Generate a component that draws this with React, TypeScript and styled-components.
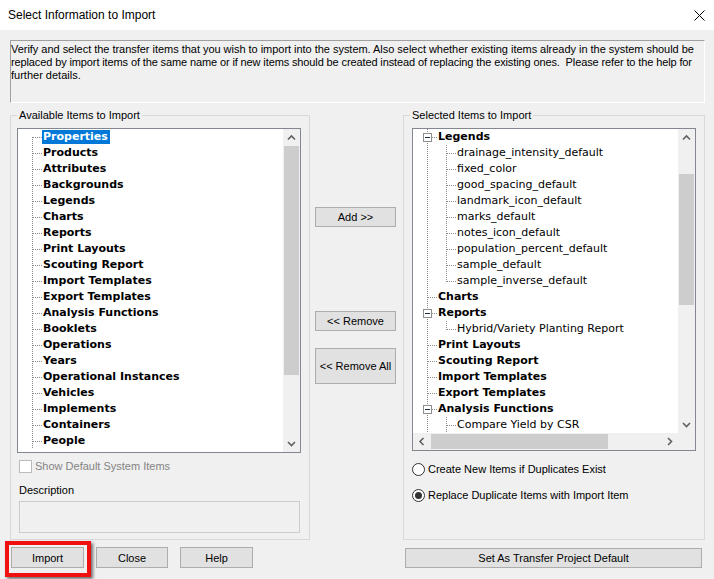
import React from 'react';
import styled, { createGlobalStyle } from 'styled-components';

const UI = `"Liberation Sans", Arial, sans-serif`;
const TREE = `"DejaVu Sans", Verdana, sans-serif`;

const GlobalStyle = createGlobalStyle`
  html, body { margin: 0; padding: 0; background: #f0f0f0; }
  body { font-family: ${UI}; }
  * { box-sizing: border-box; }
`;

const Window = styled.div`
  width: 714px;
  height: 579px;
  background: #f0f0f0;
  display: flex;
  flex-direction: column;
  overflow: hidden;
  font-family: ${UI};
  font-size: 11px;
  color: #000;
`;

const TitleBar = styled.div`
  flex: none;
  height: 30px;
  background: #fff;
  display: flex;
  align-items: center;
  justify-content: space-between;
  padding: 0 9px 0 8px;
`;

const Title = styled.div`
  font-size: 12px;
  line-height: 16px;
`;

const Body = styled.div`
  display: flex;
  flex-direction: column;
  padding: 10px 9px 0 10px;
`;

const Intro = styled.div`
  flex: none;
  height: 63px;
  border: 1px solid;
  border-color: #a0a0a0 #ffffff #ffffff #a0a0a0;
  padding: 2px 0 0 0;
  line-height: 13px;
  white-space: nowrap;
  overflow: hidden;
`;

const IntroLine = styled.div<{ $ls: number }>`
  letter-spacing: ${(p) => p.$ls}px;
`;

const Main = styled.div`
  margin-top: 6px;
  height: 431px;
  display: grid;
  grid-template-columns: 300px 93px 302px;
`;

const Group = styled.fieldset<{ $pl: number; $pr: number }>`
  margin: 0;
  min-width: 0;
  border: 1px solid #d9d9d9;
  padding: 6px ${(p) => p.$pr}px 0 ${(p) => p.$pl}px;
  display: flex;
  flex-direction: column;
`;

const Legend = styled.legend<{ $ml?: number }>`
  padding: 0 2px;
  margin-left: ${(p) => p.$ml ?? 0}px;
  font-size: 11px;
  line-height: 13px;
`;

const TreeFrame = styled.div<{ $h: number; $hscroll?: boolean }>`
  flex: none;
  height: ${(p) => p.$h}px;
  border: 1px solid #828790;
  background: #fff;
  display: grid;
  grid-template-columns: 1fr 17px;
  grid-template-rows: ${(p) => (p.$hscroll ? '1fr 17px' : '1fr')};
  overflow: hidden;
`;

const TreeList = styled.div`
  overflow: hidden;
  padding-left: 5px;
  display: flex;
  flex-direction: column;
  background: #fff;
`;

const TreeRowBox = styled.div`
  display: flex;
  align-items: center;
  height: 16px;
  flex: none;
`;

const CellSvg = styled.svg`
  display: block;
  flex: none;
`;

const NodeLabel = styled.span<{ $bold: boolean; $selected?: boolean }>`
  font-family: ${TREE};
  font-size: 11px;
  font-weight: ${(p) => (p.$bold ? 700 : 400)};
  line-height: 14px;
  height: 14px;
  padding: 0 2px 0 1px;
  white-space: nowrap;
  background: ${(p) => (p.$selected ? '#0078d7' : 'transparent')};
  color: ${(p) => (p.$selected ? '#ffffff' : '#000000')};
`;

const ScrollV = styled.div`
  background: #f0f0f0;
  display: flex;
  flex-direction: column;
`;

const ScrollH = styled.div`
  background: #f0f0f0;
  display: flex;
  flex-direction: row;
`;

const Corner = styled.div`
  background: #f0f0f0;
`;

const ArrowBox = styled.div`
  flex: none;
  width: 17px;
  height: 17px;
  display: flex;
  align-items: center;
  justify-content: center;
`;

const TrackV = styled.div`
  flex: 1;
  min-height: 0;
`;

const TrackH = styled.div`
  flex: 1;
  min-width: 0;
  display: flex;
`;

const ThumbV = styled.div<{ $offset: number; $size: number }>`
  margin: ${(p) => p.$offset}px 1px 0 1px;
  height: ${(p) => p.$size}px;
  background: #cdcdcd;
`;

const ThumbH = styled.div<{ $offset: number; $size: number }>`
  margin: 1px 0 1px ${(p) => p.$offset}px;
  width: ${(p) => p.$size}px;
  background: #cdcdcd;
`;

const CheckRow = styled.label`
  margin-top: 7px;
  margin-left: 2px;
  height: 13px;
  display: flex;
  align-items: center;
  gap: 3px;
  color: #838383;
  line-height: 13px;
`;

const CheckBox = styled.span`
  width: 13px;
  height: 13px;
  border: 1px solid #bcbcbc;
  background: #ffffff;
  flex: none;
`;

const FieldLabel = styled.div`
  margin-top: 11px;
  margin-left: 2px;
  line-height: 13px;
`;

const DescField = styled.div`
  margin-top: 4px;
  margin-left: 2px;
  width: 281px;
  height: 32px;
  border: 1px solid #cccccc;
  background: #f0f0f0;
`;

const Middle = styled.div`
  display: flex;
  flex-direction: column;
  align-items: flex-start;
  padding-left: 5px;
`;

const Button = styled.button<{ $w: number; $h?: number; $mt?: number }>`
  width: ${(p) => p.$w}px;
  height: ${(p) => p.$h ?? 21}px;
  margin: ${(p) => p.$mt ?? 0}px 0 0 0;
  padding: 0;
  background: #e1e1e1;
  border: 1px solid #adadad;
  font-family: ${UI};
  font-size: 11px;
  color: #000;
  flex: none;
`;

const RadioRow = styled.label<{ $mt: number }>`
  margin-top: ${(p) => p.$mt}px;
  height: 13px;
  display: flex;
  align-items: center;
  gap: 3px;
  line-height: 13px;
`;

const RadioCircle = styled.span<{ $checked?: boolean }>`
  width: 13px;
  height: 13px;
  border-radius: 50%;
  border: 1px solid #333333;
  background: #ffffff;
  flex: none;
  display: flex;
  align-items: center;
  justify-content: center;
  &::after {
    content: '';
    width: 7px;
    height: 7px;
    border-radius: 50%;
    background: ${(p) => (p.$checked ? '#333333' : 'transparent')};
  }
`;

const Footer = styled.div`
  margin-top: 7px;
  display: grid;
  grid-template-columns: 393px 302px;
`;

const LeftButtons = styled.div`
  display: flex;
  gap: 12px;
  padding-left: 1px;
`;

const RightButtons = styled.div`
  padding-left: 2px;
  padding-top: 1px;
`;

const HighlightWrap = styled.div`
  position: relative;
  display: flex;
`;

const Highlight = styled.div`
  position: absolute;
  left: -6px;
  top: -6px;
  right: -7px;
  bottom: -9px;
  border: 4px solid #f01010;
  box-shadow: 2px 2px 3px rgba(0, 0, 0, 0.55);
  pointer-events: none;
`;

const DOT = '#8a8a8a';

type Conn = {
  top: boolean;
  bottom: boolean;
  expander?: boolean;
};

const ConnectorCell: React.FC<Conn> = ({ top, bottom, expander }) => (
  <CellSvg width="19" height="16" viewBox="0 0 19 16">
    {top && (
      <line x1="9.5" y1="0" x2="9.5" y2={expander ? 4 : 9} stroke={DOT} strokeDasharray="1 1" />
    )}
    {bottom && (
      <line x1="9.5" y1={expander ? 14 : 8} x2="9.5" y2="16" stroke={DOT} strokeDasharray="1 1" />
    )}
    <line x1={expander ? 14 : 10} y1="8.5" x2="19" y2="8.5" stroke={DOT} strokeDasharray="1 1" />
    {expander && (
      <>
        <rect x="5.5" y="4.5" width="8" height="8" fill="#ffffff" stroke="#8f8f8f" />
        <line x1="7" y1="8.5" x2="12" y2="8.5" stroke="#1e2a44" />
      </>
    )}
  </CellSvg>
);

const PassCell: React.FC = () => (
  <CellSvg width="19" height="16" viewBox="0 0 19 16">
    <line x1="9.5" y1="0" x2="9.5" y2="16" stroke={DOT} strokeDasharray="1 1" />
  </CellSvg>
);

type Row = {
  label: string;
  depth: 0 | 1;
  bold: boolean;
  top: boolean;
  bottom: boolean;
  expander?: boolean;
  selected?: boolean;
};

const TreeRow: React.FC<{ row: Row }> = ({ row }) => (
  <TreeRowBox>
    {row.depth === 1 && <PassCell />}
    <ConnectorCell top={row.top} bottom={row.bottom} expander={row.expander} />
    <NodeLabel $bold={row.bold} $selected={row.selected}>
      {row.label}
    </NodeLabel>
  </TreeRowBox>
);

const Chevron: React.FC<{ dir: 'up' | 'down' | 'left' | 'right' }> = ({ dir }) => {
  const d = {
    up: 'M1 5.5 L4.5 2 L8 5.5',
    down: 'M1 2 L4.5 5.5 L8 2',
    left: 'M5.5 1 L2 4.5 L5.5 8',
    right: 'M2 1 L5.5 4.5 L2 8',
  }[dir];
  const horizontal = dir === 'up' || dir === 'down';
  return (
    <CellSvg
      width={horizontal ? 9 : 8}
      height={horizontal ? 8 : 9}
      viewBox={horizontal ? '0 0 9 8' : '0 0 8 9'}
    >
      <path d={d} fill="none" stroke="#606060" strokeWidth="1.6" />
    </CellSvg>
  );
};

const VScroll: React.FC<{ offset: number; size: number }> = ({ offset, size }) => (
  <ScrollV>
    <ArrowBox>
      <Chevron dir="up" />
    </ArrowBox>
    <TrackV>
      <ThumbV $offset={offset} $size={size} />
    </TrackV>
    <ArrowBox>
      <Chevron dir="down" />
    </ArrowBox>
  </ScrollV>
);

const HScroll: React.FC<{ offset: number; size: number }> = ({ offset, size }) => (
  <ScrollH>
    <ArrowBox>
      <Chevron dir="left" />
    </ArrowBox>
    <TrackH>
      <ThumbH $offset={offset} $size={size} />
    </TrackH>
    <ArrowBox>
      <Chevron dir="right" />
    </ArrowBox>
  </ScrollH>
);

const leftNames = [
  'Properties',
  'Products',
  'Attributes',
  'Backgrounds',
  'Legends',
  'Charts',
  'Reports',
  'Print Layouts',
  'Scouting Report',
  'Import Templates',
  'Export Templates',
  'Analysis Functions',
  'Booklets',
  'Operations',
  'Years',
  'Operational Instances',
  'Vehicles',
  'Implements',
  'Containers',
  'People',
];

const leftRows: Row[] = leftNames.map((label, i) => ({
  label,
  depth: 0,
  bold: true,
  top: i > 0,
  bottom: true,
  selected: i === 0,
}));

const root = (label: string, expander = false): Row => ({
  label,
  depth: 0,
  bold: true,
  top: true,
  bottom: true,
  expander,
});

const child = (label: string, last = false): Row => ({
  label,
  depth: 1,
  bold: false,
  top: true,
  bottom: !last,
});

const rightRows: Row[] = [
  root('Legends', true),
  child('drainage_intensity_default'),
  child('fixed_color'),
  child('good_spacing_default'),
  child('landmark_icon_default'),
  child('marks_default'),
  child('notes_icon_default'),
  child('population_percent_default'),
  child('sample_default'),
  child('sample_inverse_default', true),
  root('Charts'),
  root('Reports', true),
  child('Hybrid/Variety Planting Report', true),
  root('Print Layouts'),
  root('Scouting Report'),
  root('Import Templates'),
  root('Export Templates'),
  root('Analysis Functions', true),
  child('Compare Yield by CSR'),
];

export default function App() {
  return (
    <>
      <GlobalStyle />
      <Window>
        <TitleBar>
          <Title>Select Information to Import</Title>
          <CellSvg width="11" height="11" viewBox="0 0 11 11">
            <path d="M0.5 0.5 L10.5 10.5 M10.5 0.5 L0.5 10.5" stroke="#000" strokeWidth="1" fill="none" />
          </CellSvg>
        </TitleBar>
        <Body>
          <Intro>
            <IntroLine $ls={-0.03}>
              Verify and select the transfer items that you wish to import into the system. Also select whether existing items already in the system should be
            </IntroLine>
            <IntroLine $ls={-0.12}>
              replaced by import items of the same name or if new items should be created instead of replacing the existing ones.{'\u00a0'} Please refer to the help for
            </IntroLine>
            <IntroLine $ls={0}>further details.</IntroLine>
          </Intro>
          <Main>
            <Group $pl={6} $pr={8}>
              <Legend>Available Items to Import</Legend>
              <TreeFrame $h={325}>
                <TreeList>
                  {leftRows.map((r) => (
                    <TreeRow key={r.label} row={r} />
                  ))}
                </TreeList>
                <VScroll offset={0} size={229} />
              </TreeFrame>
              <CheckRow>
                <CheckBox />
                Show Default System Items
              </CheckRow>
              <FieldLabel>Description</FieldLabel>
              <DescField />
            </Group>
            <Middle>
              <Button $w={81} $h={20} $mt={98}>
                Add &gt;&gt;
              </Button>
              <Button $w={81} $h={20} $mt={84}>
                &lt;&lt; Remove
              </Button>
              <Button $w={81} $h={36} $mt={17}>
                &lt;&lt; Remove All
              </Button>
            </Middle>
            <Group $pl={8} $pr={8}>
              <Legend $ml={-2}>Selected Items to Import</Legend>
              <TreeFrame $h={323} $hscroll>
                <TreeList>
                  {rightRows.map((r) => (
                    <TreeRow key={r.label} row={r} />
                  ))}
                </TreeList>
                <VScroll offset={28} size={131} />
                <HScroll offset={1} size={177} />
                <Corner />
              </TreeFrame>
              <RadioRow $mt={12}>
                <RadioCircle />
                Create New Items if Duplicates Exist
              </RadioRow>
              <RadioRow $mt={13}>
                <RadioCircle $checked />
                Replace Duplicate Items with Import Item
              </RadioRow>
            </Group>
          </Main>
          <Footer>
            <LeftButtons>
              <HighlightWrap>
                <Button $w={73}>Import</Button>
                <Highlight />
              </HighlightWrap>
              <Button $w={72}>Close</Button>
              <Button $w={73}>Help</Button>
            </LeftButtons>
            <RightButtons>
              <Button $w={297} $h={20}>
                Set As Transfer Project Default
              </Button>
            </RightButtons>
          </Footer>
        </Body>
      </Window>
    </>
  );
}
